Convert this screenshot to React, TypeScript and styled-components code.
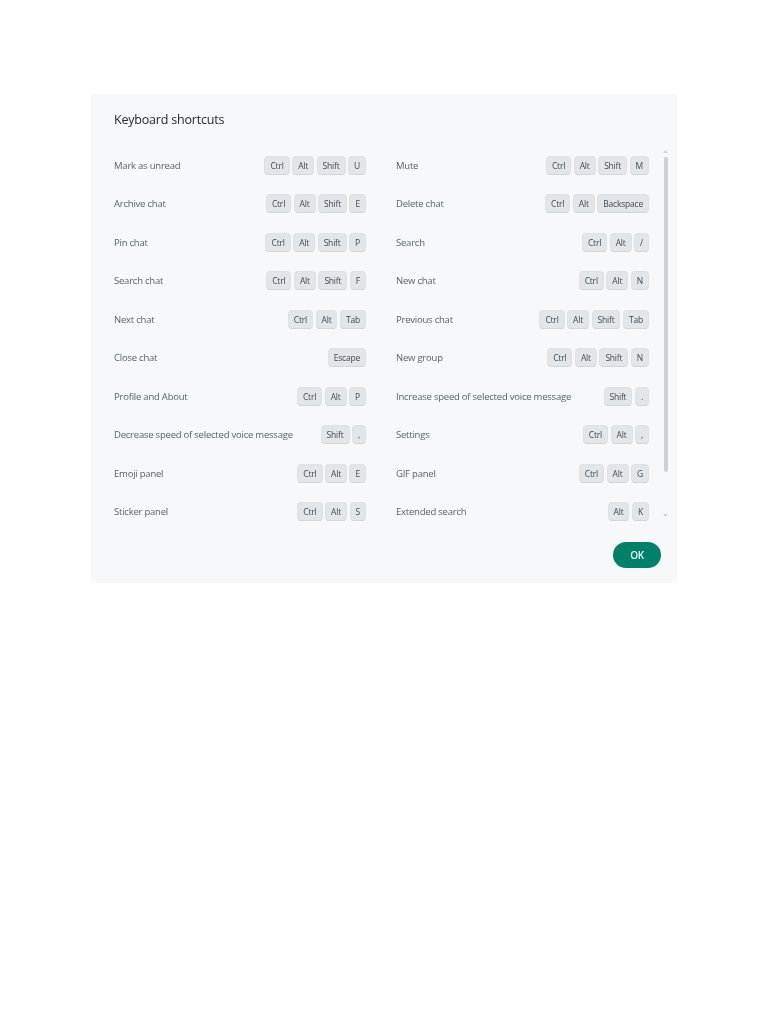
import React from 'react'
import styled, { createGlobalStyle } from 'styled-components'

const GlobalStyle = createGlobalStyle`
  html, body {
    margin: 0;
    padding: 0;
    background: #ffffff;
    font-family: "Open Sans", "Noto Sans", sans-serif;
  }
`

const Page = styled.div`
  width: 768px;
  height: 1024px;
  padding: 94px 0 0 91px;
  box-sizing: border-box;
`

const Dialog = styled.section`
  width: 586px;
  height: 489px;
  background: #f6f8fa;
  box-sizing: border-box;
  padding: 16px 16px 15px 23px;
  display: flex;
  flex-direction: column;
  filter: blur(0.4px);
`

const Title = styled.h1`
  margin: 0;
  height: 19px;
  line-height: 19px;
  font-size: 12.5px;
  letter-spacing: -0.2px;
  font-weight: 400;
  color: #24292d;
`

const Body = styled.div`
  display: flex;
  margin-top: 17px;
`

const Grid = styled.div`
  width: 535px;
  display: grid;
  grid-template-columns: 252px 253px;
  column-gap: 30px;
  grid-auto-rows: 38.5px;
`

const Row = styled.div`
  display: flex;
  align-items: center;
  justify-content: space-between;
`

const Label = styled.span`
  font-size: 9.5px;
  letter-spacing: -0.22px;
  color: #5a6369;
  white-space: nowrap;
`

const Keys = styled.div`
  display: flex;
  gap: 2.5px;
`

const Key = styled.kbd`
  height: 19px;
  padding: 0 5px;
  box-sizing: border-box;
  display: flex;
  align-items: center;
  justify-content: center;
  background: #e3e6e9;
  border: 1px solid #dfe2e5;
  border-bottom-color: #d2d6d9;
  border-radius: 4px;
  font-family: inherit;
  font-size: 8.5px;
  letter-spacing: -0.2px;
  color: #434b50;
`

const Scrollbar = styled.div`
  margin: 4px 0 0 14px;
  width: 8px;
  height: 367px;
  display: flex;
  flex-direction: column;
  align-items: center;
`

const Arrow = styled.svg`
  width: 5px;
  height: 3px;
  fill: #d0d3d6;
  flex: none;
`

const Thumb = styled.div`
  width: 4px;
  height: 315px;
  margin: 4px 0 auto;
  background: #cdd0d3;
  border-radius: 2px;
`

const Footer = styled.div`
  margin-top: auto;
  display: flex;
  justify-content: flex-end;
`

const OkButton = styled.button`
  width: 48px;
  height: 26px;
  border: none;
  border-radius: 13px;
  background: #008069;
  color: #eef6f4;
  font-family: inherit;
  font-size: 10px;
  font-weight: 600;
  letter-spacing: -0.3px;
  padding: 0;
`

const shortcuts: [string, string[]][] = [
  ['Mark as unread', ['Ctrl', 'Alt', 'Shift', 'U']],
  ['Mute', ['Ctrl', 'Alt', 'Shift', 'M']],
  ['Archive chat', ['Ctrl', 'Alt', 'Shift', 'E']],
  ['Delete chat', ['Ctrl', 'Alt', 'Backspace']],
  ['Pin chat', ['Ctrl', 'Alt', 'Shift', 'P']],
  ['Search', ['Ctrl', 'Alt', '/']],
  ['Search chat', ['Ctrl', 'Alt', 'Shift', 'F']],
  ['New chat', ['Ctrl', 'Alt', 'N']],
  ['Next chat', ['Ctrl', 'Alt', 'Tab']],
  ['Previous chat', ['Ctrl', 'Alt', 'Shift', 'Tab']],
  ['Close chat', ['Escape']],
  ['New group', ['Ctrl', 'Alt', 'Shift', 'N']],
  ['Profile and About', ['Ctrl', 'Alt', 'P']],
  ['Increase speed of selected voice message', ['Shift', '.']],
  ['Decrease speed of selected voice message', ['Shift', ',']],
  ['Settings', ['Ctrl', 'Alt', ',']],
  ['Emoji panel', ['Ctrl', 'Alt', 'E']],
  ['GIF panel', ['Ctrl', 'Alt', 'G']],
  ['Sticker panel', ['Ctrl', 'Alt', 'S']],
  ['Extended search', ['Alt', 'K']],
]

export default function App() {
  return (
    <Page>
      <GlobalStyle />
      <Dialog>
        <Title>Keyboard shortcuts</Title>
        <Body>
          <Grid>
            {shortcuts.map(([label, keys]) => (
              <Row key={label}>
                <Label>{label}</Label>
                <Keys>
                  {keys.map((k) => (
                    <Key key={k}>{k}</Key>
                  ))}
                </Keys>
              </Row>
            ))}
          </Grid>
          <Scrollbar>
            <Arrow viewBox="0 0 6 4"><path d="M3 0 6 4H0z" /></Arrow>
            <Thumb />
            <Arrow viewBox="0 0 6 4"><path d="M0 0h6L3 4z" /></Arrow>
          </Scrollbar>
        </Body>
        <Footer>
          <OkButton>OK</OkButton>
        </Footer>
      </Dialog>
    </Page>
  )
}
